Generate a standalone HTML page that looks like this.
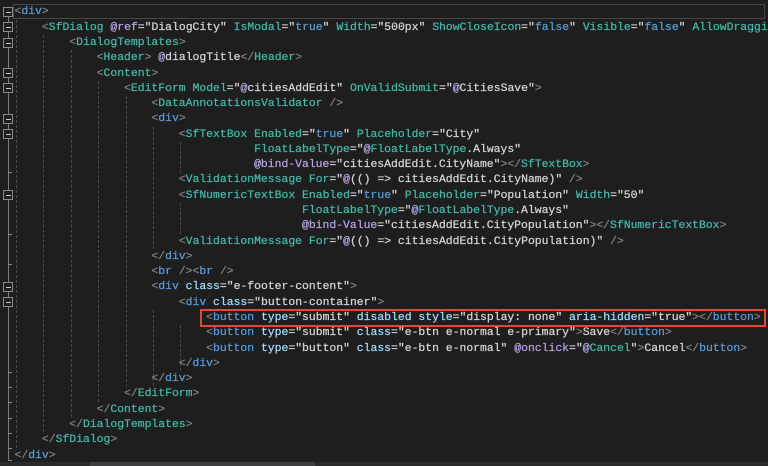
<!DOCTYPE html>
<html><head><meta charset="utf-8"><style>
html,body{margin:0;padding:0;background:#1e1e1e;width:768px;height:466px;overflow:hidden;position:relative}
.code{position:absolute;left:14.5px;top:4.4px;margin:0;font-family:"Liberation Mono",monospace;font-size:11.42px;line-height:15.28px;color:#d4d4d4;white-space:pre;-webkit-text-stroke:0.25px}
.p{color:#808080}.t{color:#569cd6}.c{color:#3ebaa9}.a{color:#9cdcfe}.k{color:#569cd6}.r{color:#b7a0e2}.s{color:#d4d4d4}
.g{position:absolute;width:0;border-left:1px dashed #4a4a4a}
.f{position:absolute;left:3px;width:8px;height:8px;border:1px solid #8a8a8a;background:#1e1e1e;box-sizing:content-box}
.f:after{content:"";position:absolute;left:2px;top:3.5px;width:5px;height:1px;background:#c8c8c8}
.tk{position:absolute;left:8px;width:4px;height:1px;background:#8a8a8a}
</style></head><body>
<div style="position:absolute;left:8px;top:12px;width:1px;height:448px;background:#7a7a7a"></div>
<div style="position:absolute;left:13px;top:4px;width:752px;height:15px;border:1px solid #464646;box-sizing:border-box"></div>
<div style="position:absolute;left:200px;top:309px;width:566px;height:18px;border:2px solid #e0483a;box-sizing:border-box"></div>
<div style="position:absolute;left:0;top:462px;width:768px;height:4px;background:#2b2b2b"></div>
<div style="position:absolute;left:90px;top:462px;width:225px;height:4px;background:#3e3e42"></div>

<div class="g" style="left:16px;top:20px;height:428px"></div>
<div class="g" style="left:43px;top:35px;height:397px"></div>
<div class="g" style="left:71px;top:50px;height:367px"></div>
<div class="g" style="left:98px;top:81px;height:321px"></div>
<div class="g" style="left:126px;top:96px;height:291px"></div>
<div class="g" style="left:153px;top:127px;height:122px"></div>
<div class="g" style="left:153px;top:310px;height:76px"></div>
<div class="g" style="left:180px;top:142px;height:31px"></div>
<div class="g" style="left:180px;top:203px;height:31px"></div>
<div class="g" style="left:180px;top:325px;height:46px"></div>

<div class="f" style="top:7px"></div>
<div class="f" style="top:22px"></div>
<div class="f" style="top:38px"></div>
<div class="f" style="top:68px"></div>
<div class="f" style="top:83px"></div>
<div class="f" style="top:114px"></div>
<div class="f" style="top:129px"></div>
<div class="f" style="top:190px"></div>
<div class="f" style="top:282px"></div>
<div class="f" style="top:297px"></div>
<div class="tk" style="top:172px"></div>
<div class="tk" style="top:234px"></div>
<div class="tk" style="top:264px"></div>
<div class="tk" style="top:372px"></div>
<div class="tk" style="top:387px"></div>
<div class="tk" style="top:402px"></div>
<div class="tk" style="top:418px"></div>
<div class="tk" style="top:433px"></div>
<div class="tk" style="top:448px"></div>
<div class="tk" style="top:460px"></div>

<pre class="code"><span class="p">&lt;</span><span class="t">div</span><span class="p">&gt;</span>
    <span class="p">&lt;</span><span class="c">SfDialog</span> <span class="r">@ref</span>=<span class="s">"DialogCity"</span> <span class="c">IsModal</span>="<span class="k">true</span>" <span class="c">Width</span>="500px" <span class="c">ShowCloseIcon</span>="<span class="k">false</span>" <span class="c">Visible</span>="<span class="k">false</span>" <span class="c">AllowDraggi</span>
        <span class="p">&lt;</span><span class="c">DialogTemplates</span><span class="p">&gt;</span>
            <span class="p">&lt;</span><span class="c">Header</span><span class="p">&gt;</span> <span class="r">@</span>dialogTitle<span class="p">&lt;/</span><span class="c">Header</span><span class="p">&gt;</span>
            <span class="p">&lt;</span><span class="c">Content</span><span class="p">&gt;</span>
                <span class="p">&lt;</span><span class="c">EditForm</span> <span class="c">Model</span>="<span class="r">@</span>citiesAddEdit" <span class="c">OnValidSubmit</span>="<span class="r">@</span>CitiesSave"<span class="p">&gt;</span>
                    <span class="p">&lt;</span><span class="c">DataAnnotationsValidator</span> <span class="p">/&gt;</span>
                    <span class="p">&lt;</span><span class="t">div</span><span class="p">&gt;</span>
                        <span class="p">&lt;</span><span class="c">SfTextBox</span> <span class="c">Enabled</span>="<span class="k">true</span>" <span class="c">Placeholder</span>="City"
                                   <span class="c">FloatLabelType</span>="<span class="r">@</span><span class="c">FloatLabelType</span>.Always"
                                   <span class="r">@bind-Value</span>="citiesAddEdit.CityName"<span class="p">&gt;&lt;/</span><span class="c">SfTextBox</span><span class="p">&gt;</span>
                        <span class="p">&lt;</span><span class="c">ValidationMessage</span> <span class="c">For</span>="<span class="r">@</span>(() =&gt; citiesAddEdit.CityName)" <span class="p">/&gt;</span>
                        <span class="p">&lt;</span><span class="c">SfNumericTextBox</span> <span class="c">Enabled</span>="<span class="k">true</span>" <span class="c">Placeholder</span>="Population" <span class="c">Width</span>="50"
                                          <span class="c">FloatLabelType</span>="<span class="r">@</span><span class="c">FloatLabelType</span>.Always"
                                          <span class="r">@bind-Value</span>="citiesAddEdit.CityPopulation"<span class="p">&gt;&lt;/</span><span class="c">SfNumericTextBox</span><span class="p">&gt;</span>
                        <span class="p">&lt;</span><span class="c">ValidationMessage</span> <span class="c">For</span>="<span class="r">@</span>(() =&gt; citiesAddEdit.CityPopulation)" <span class="p">/&gt;</span>
                    <span class="p">&lt;/</span><span class="t">div</span><span class="p">&gt;</span>
                    <span class="p">&lt;</span><span class="t">br</span> <span class="p">/&gt;&lt;</span><span class="t">br</span> <span class="p">/&gt;</span>
                    <span class="p">&lt;</span><span class="t">div</span> <span class="a">class</span>="e-footer-content"<span class="p">&gt;</span>
                        <span class="p">&lt;</span><span class="t">div</span> <span class="a">class</span>="button-container"<span class="p">&gt;</span>
                            <span class="p">&lt;</span><span class="t">button</span> <span class="a">type</span>="submit" <span class="a">disabled</span> <span class="a">style</span>="display: none" <span class="a">aria-hidden</span>="true"<span class="p">&gt;&lt;/</span><span class="t">button</span><span class="p">&gt;</span>
                            <span class="p">&lt;</span><span class="t">button</span> <span class="a">type</span>="submit" <span class="a">class</span>="e-btn e-normal e-primary"<span class="p">&gt;</span>Save<span class="p">&lt;/</span><span class="t">button</span><span class="p">&gt;</span>
                            <span class="p">&lt;</span><span class="t">button</span> <span class="a">type</span>="button" <span class="a">class</span>="e-btn e-normal" <span class="r">@onclick</span>="<span class="r">@</span><span class="c">Cancel</span>"<span class="p">&gt;</span>Cancel<span class="p">&lt;/</span><span class="t">button</span><span class="p">&gt;</span>
                        <span class="p">&lt;/</span><span class="t">div</span><span class="p">&gt;</span>
                    <span class="p">&lt;/</span><span class="t">div</span><span class="p">&gt;</span>
                <span class="p">&lt;/</span><span class="c">EditForm</span><span class="p">&gt;</span>
            <span class="p">&lt;/</span><span class="c">Content</span><span class="p">&gt;</span>
        <span class="p">&lt;/</span><span class="c">DialogTemplates</span><span class="p">&gt;</span>
    <span class="p">&lt;/</span><span class="c">SfDialog</span><span class="p">&gt;</span>
<span class="p">&lt;/</span><span class="t">div</span><span class="p">&gt;</span></pre>
</body></html>
